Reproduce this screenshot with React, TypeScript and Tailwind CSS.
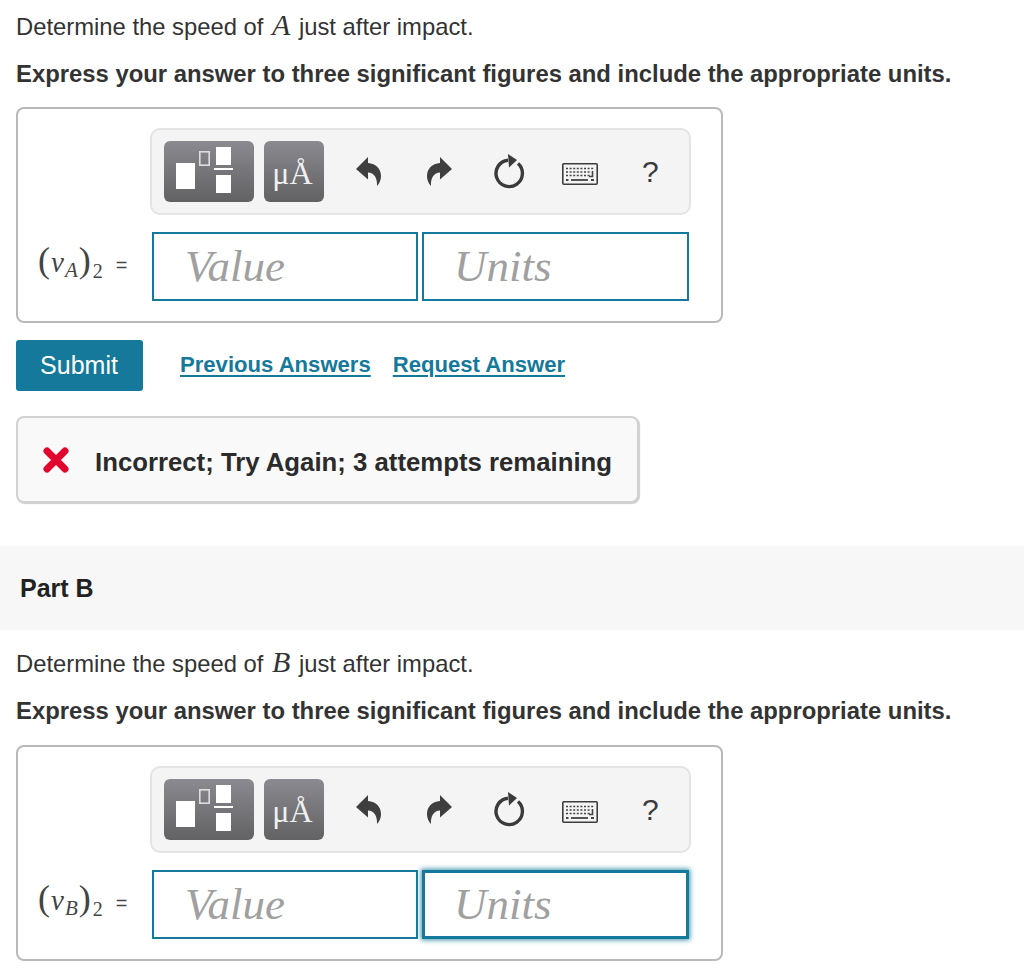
const sans = "font-['Liberation_Sans',Arial,sans-serif]";
const serif = "font-['Liberation_Serif','Times_New_Roman',serif]";

const Undo = ({ flip }: { flip?: boolean }) => (
  <svg width="25" height="29" viewBox="0 0 25 29" className={flip ? "-scale-x-100" : ""}>
    <path
      d="M0 12 L12 0 L12 6 C20 6.5 25 12 25 19 C25 23 23.5 26.5 21 29 C21.5 21 18 15.5 12 15.5 L12 22.5 Z"
      fill="#3f3f3f"
    />
  </svg>
);

const Redo = () => (
  <svg width="32" height="35" viewBox="0 0 32 35">
    <path d="M24 9.5 A13.2 13.2 0 1 1 14 6.2" fill="none" stroke="#3a3a3a" strokeWidth="3.4" />
    <path d="M14 0 L23 6 L15 13.5 Z" fill="#3a3a3a" />
  </svg>
);

const Keyboard = () => (
  <svg width="36" height="22" viewBox="0 0 36 22">
    <rect x="0.8" y="0.8" width="34.4" height="20.4" rx="1" fill="#f4f4f4" stroke="#3d3d3d" strokeWidth="1.6" />
    <path d="M4 5.5 H32" stroke="#444" strokeWidth="1.6" strokeDasharray="2 1.6" />
    <path d="M4 9 H28" stroke="#444" strokeWidth="1.6" strokeDasharray="2 1.6" />
    <path d="M4 12.5 H28" stroke="#444" strokeWidth="1.6" strokeDasharray="2 1.6" />
    <path d="M30.5 8 V13.5 H27" stroke="#444" strokeWidth="1.6" fill="none" />
    <path d="M9 17 H26" stroke="#444" strokeWidth="1.8" />
    <path d="M4 17 H6.5 M29 17 H32" stroke="#444" strokeWidth="1.8" />
  </svg>
);

const TemplatesIcon = () => (
  <svg width="58" height="46" viewBox="0 0 58 46">
    <rect x="0" y="16" width="19" height="26" fill="#fff" />
    <rect x="23.8" y="4.8" width="9.4" height="13.4" fill="none" stroke="#dedede" strokeWidth="1.6" />
    <rect x="40" y="0" width="15" height="18" fill="#fff" />
    <rect x="38" y="21" width="19" height="2" fill="#fff" />
    <rect x="40" y="28" width="15" height="18" fill="#fff" />
  </svg>
);

const Toolbar = () => (
  <div className="flex h-[87px] w-[541px] items-center rounded-[10px] border-2 border-[#e4e4e4] bg-[#f4f4f4] pl-3">
    <div className="h-[61px] w-[90px] rounded-[6px] bg-gradient-to-b from-[#8b8a90] to-[#626264] pl-3 pt-[6px]">
      <TemplatesIcon />
    </div>
    <div className={`${serif} ml-[10px] flex h-[61px] w-[60px] items-end justify-center rounded-[6px] bg-gradient-to-b from-[#8b8a90] to-[#626264] pb-[13px] pr-[3px] text-[32px] leading-none text-[#f0f0f0]`}>
      μÅ
    </div>
    <div className="ml-[31px] flex w-[26px] justify-center"><Undo /></div>
    <div className="ml-[45px] flex w-[26px] justify-center"><Undo flip /></div>
    <div className="ml-[42px] flex w-[32px] justify-center"><Redo /></div>
    <div className="ml-[36px] flex w-[36px] justify-center pt-[4px]"><Keyboard /></div>
    <span className={`${sans} ml-[44px] text-[30px] leading-none text-[#3a3a3a]`}>?</span>
  </div>
);

const Field = ({ label, focused, wide }: { label: string; focused?: boolean; wide?: boolean }) => (
  <div
    className={`${serif} flex h-[69px] ${wide ? "w-[267px]" : "w-[266px]"} items-center bg-white ${
      focused ? "pl-[29px]" : wide ? "pl-[30px]" : "pl-[31px]"
    } text-[45px] italic text-[#a0a0a0] ${
      focused
        ? "border-[3px] border-[#14799a] shadow-[0_0_5px_1px_#3f93ae]"
        : "border-2 border-[#14799a]"
    }`}
  >
    {label}
  </div>
);

const AnswerBox = ({ sub, focused }: { sub: string; focused?: boolean }) => (
  <div className="h-[216px] w-[707px] rounded-[8px] border-2 border-[#b9b9b9] bg-white pl-[132px] pt-[19px]">
    <Toolbar />
    <div className="relative mt-[17px] flex gap-[4px] pl-[2px]">
      <div className={`${serif} absolute -left-[112px] top-[8px] flex items-baseline whitespace-nowrap text-[#444]`}>
        <span className="text-[36px] leading-[40px]">(</span>
        <span className="ml-[1px] text-[29px] italic">v</span>
        <span className="ml-[1px] translate-y-[5px] text-[21px] italic">{sub}</span>
        <span className="ml-[1px] text-[36px] leading-[40px]">)</span>
        <span className="ml-[2px] translate-y-[6px] text-[20px]">2</span>
        <span className={`${sans} ml-[13px] text-[20px]`}>=</span>
      </div>
      <Field label="Value" />
      <Field label="Units" focused={focused} wide />
    </div>
  </div>
);

const Prompt = ({ letter }: { letter: string }) => (
  <>
    <p className="text-[23.8px] leading-[32px] text-[#333]">
      Determine the speed of <span className={`${serif} mx-[2px] text-[30px] italic`}>{letter}</span> just after impact.
    </p>
    <p className="mt-[15px] text-[23.85px] font-bold leading-[32px] text-[#333]">
      Express your answer to three significant figures and include the appropriate units.
    </p>
  </>
);

export default function App() {
  return (
    <div className={`${sans} h-[974px] w-[1024px] overflow-hidden bg-white`}>
      <div className="px-4 pt-[9px]">
        <Prompt letter="A" />
        <div className="mt-[17px]"><AnswerBox sub="A" /></div>

        <div className="mt-[17px] flex items-center">
          <button className="h-[51px] w-[127px] rounded-[3px] bg-[#14799a] pr-[1px] text-[25px] text-white">Submit</button>
          <a className="mb-[2px] ml-[37px] text-[22.1px] font-bold leading-[24px] text-[#14799a] underline decoration-[1.5px] underline-offset-[3px]">Previous Answers</a>
          <a className="mb-[2px] ml-[22px] text-[22.1px] font-bold leading-[24px] text-[#14799a] underline decoration-[1.5px] underline-offset-[3px]">Request Answer</a>
        </div>

        <div className="mt-[25px] flex h-[87px] w-[623px] items-center rounded-[8px] border-2 border-[#d2d2d2] bg-[#f9f9f9] pl-[25px] shadow-[1px_1px_1px_#cccccc]">
          <svg width="26" height="26" viewBox="0 0 26 26">
            <path d="M4 4 L22 22 M22 4 L4 22" stroke="#e0062d" strokeWidth="7" strokeLinecap="round" />
          </svg>
          <span className="ml-[26px] pt-[5px] text-[25.75px] font-bold text-[#2b2b2b]">Incorrect; Try Again; 3 attempts remaining</span>
        </div>
      </div>

      <div className="mt-[43px] flex h-[84px] items-center bg-[#f7f7f7] pl-5 pt-[2px] text-[25px] font-bold text-[#222]">Part B</div>

      <div className="px-4 pt-[16px]">
        <Prompt letter="B" />
        <div className="mt-[18px]"><AnswerBox sub="B" focused /></div>
      </div>
    </div>
  );
}
